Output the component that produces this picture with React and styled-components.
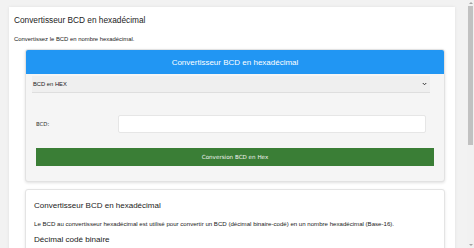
import styled, { createGlobalStyle } from "styled-components";

const GlobalStyle = createGlobalStyle`
  html, body {
    margin: 0;
    padding: 0;
    height: 248px;
    overflow: hidden;
    background: #f2f2f2;
    font-family: "Liberation Sans", Arial, sans-serif;
  }
`;

const Screen = styled.div`
  display: flex;
  height: 248px;
  overflow: hidden;
`;

const Page = styled.div`
  flex: 1;
  padding: 7px 12px 0 9px;
  min-width: 0;
  overflow: hidden;
`;

const Sheet = styled.main`
  background: #fff;
  padding: 8px 10px 0 5px;
  height: 100%;
  box-shadow: 0 0 3px rgba(0, 0, 0, 0.08);
`;

const PageTitle = styled.h1`
  margin: 0;
  font-size: 8.3px;
  line-height: 10px;
  font-weight: 400;
  color: #222;
`;

const Intro = styled.p`
  margin: 10px 0 0;
  font-size: 5.9px;
  line-height: 8px;
  color: #222;
`;

const Converter = styled.section`
  margin: 6px 0 0 11px;
  border-radius: 3px;
  background: #f5f5f5;
  border: 1px solid #e2e2e2;
  box-shadow: 0 1px 3px rgba(0, 0, 0, 0.12);
  overflow: hidden;
`;

const ConverterHead = styled.header`
  height: 24px;
  background: #2196f3;
  color: #fff;
  font-size: 8px;
  display: flex;
  align-items: center;
  justify-content: center;
`;

const ConverterBody = styled.div`
  padding: 2px 10px 15px 6px;
`;

const ModeSelect = styled.div`
  height: 16px;
  margin-right: 4px;
  background: #efefef;
  border-bottom: 1px solid #dedede;
  display: flex;
  align-items: center;
  justify-content: space-between;
  padding: 0 3px 0 1px;
  font-size: 5.8px;
  color: #222;
`;

const FormRow = styled.div`
  display: flex;
  align-items: center;
  margin: 22px 0 0 4px;
`;

const Label = styled.label`
  width: 82px;
  font-family: "DejaVu Sans", sans-serif;
  font-size: 5.4px;
  color: #333;
`;

const Field = styled.div`
  flex: 1;
  height: 18px;
  margin-right: 8px;
  background: #fff;
  border: 1px solid #e6e6e6;
  border-radius: 2px;
  box-sizing: border-box;
`;

const Convert = styled.button`
  display: block;
  width: calc(100% - 4px);
  margin: 15px 0 0 4px;
  height: 18px;
  border: 0;
  background: #3a7e36;
  color: #f4f4f4;
  font-family: "DejaVu Sans", sans-serif;
  font-size: 5.6px;
  padding: 0;
`;

const InfoCard = styled.section`
  margin: 7px 0 0 11px;
  background: #fff;
  border: 1px solid #e4e4e4;
  border-radius: 3px;
  box-shadow: 0 1px 3px rgba(0, 0, 0, 0.1);
  padding: 11px 8px 12px;
`;

const CardTitle = styled.h2`
  margin: 0;
  font-size: 8px;
  line-height: 10px;
  font-weight: 400;
  color: #222;
`;

const CardText = styled.p`
  margin: 9px 0 0;
  font-size: 6.1px;
  line-height: 8px;
  color: #222;
`;

const SubTitle = styled.h3`
  margin: 7px 0 0;
  font-size: 8.1px;
  line-height: 10px;
  font-weight: 400;
  color: #222;
`;

const Scrollbar = styled.div`
  width: 7px;
  background: #f1f1f1;
  display: flex;
  flex-direction: column;
  align-items: center;
`;

const Arrow = styled.div`
  width: 0;
  height: 0;
  border-left: 2px solid transparent;
  border-right: 2px solid transparent;
  ${(p) => (p.down ? "border-top" : "border-bottom")}: 2px solid #a3a3a3;
  margin: ${(p) => (p.down ? "auto 0 2px" : "2px 0 0")};
`;

const Thumb = styled.div`
  width: 5px;
  height: 139px;
  margin-top: 2px;
  background: #c1c1c1;
`;

function Chevron() {
  return (
    <svg width="5" height="4" viewBox="0 0 10 8">
      <path d="M1.5 2 L5 5.5 L8.5 2" fill="none" stroke="#333" strokeWidth="2" />
    </svg>
  );
}

export default function App() {
  return (
    <>
      <GlobalStyle />
      <Screen>
        <Page>
          <Sheet>
            <PageTitle>Convertisseur BCD en hexadécimal</PageTitle>
            <Intro>Convertissez le BCD en nombre hexadécimal.</Intro>
            <Converter>
              <ConverterHead>Convertisseur BCD en hexadécimal</ConverterHead>
              <ConverterBody>
                <ModeSelect>
                  <span>BCD en HEX</span>
                  <Chevron />
                </ModeSelect>
                <FormRow>
                  <Label>BCD:</Label>
                  <Field />
                </FormRow>
                <Convert>Conversion BCD en Hex</Convert>
              </ConverterBody>
            </Converter>
            <InfoCard>
              <CardTitle>Convertisseur BCD en hexadécimal</CardTitle>
              <CardText>
                Le BCD au convertisseur hexadécimal est utilisé pour convertir un BCD
                (décimal binaire-codé) en un nombre hexadécimal (Base-16).
              </CardText>
              <SubTitle>Décimal codé binaire</SubTitle>
            </InfoCard>
          </Sheet>
        </Page>
        <Scrollbar>
          <Arrow />
          <Thumb />
          <Arrow down />
        </Scrollbar>
      </Screen>
    </>
  );
}
